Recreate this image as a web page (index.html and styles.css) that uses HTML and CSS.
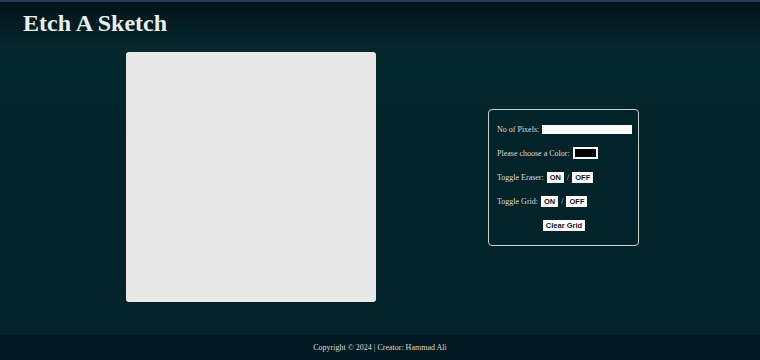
FILE: index.html
```html
<!DOCTYPE html>
<html>
<head>
    <meta charset="utf-8"/>
    <title>Etch A Sketch</title>
    <link rel="stylesheet" href="styles.css">
</head>
<body>
<header class="top">
    <h1>Etch A Sketch</h1>
</header>
<div class="main">
    <div class="board">
        <div class="grid"></div>
        <div class="panel">
            <div class="row">
                <label for="pixels">No of Pixels:</label>
                <input type="text" id="pixels" class="pixels">
            </div>
            <div class="row">
                <label>Please choose a Color:</label>
                <span class="color"></span>
            </div>
            <div class="row">
                Toggle Eraser: <button class="btn">ON</button> / <button class="btn">OFF</button>
            </div>
            <div class="row">
                Toggle Grid: <button class="btn">ON</button> / <button class="btn">OFF</button>
            </div>
            <div class="row center">
                <button class="btn">Clear Grid</button>
            </div>
        </div>
    </div>
</div>
<footer class="foot">Copyright &copy; 2024 | Creator: Hammad Ali</footer>
</body>
</html>
```

FILE: styles.css
```css
html, body, h1, div {
    margin: 0;
    padding: 0;
}

body {
    width: 760px;
    height: 360px;
    overflow: hidden;
    font-family: "Liberation Serif", "Times New Roman", serif;
    color: #e6e6e6;
    background: #022329;
}

.top {
    height: 43px;
    border-top: 2px solid #2b3a5a;
    background: linear-gradient(#021419, #03262b);
}

.top h1 {
    font-size: 24px;
    font-weight: bold;
    color: #e8eeee;
    padding-left: 23px;
    line-height: 42px;
}

.main {
    height: 283px;
    padding-top: 7px;
    background: linear-gradient(#03292c, #022329 40%, #02232a);
}

.board {
    height: 250px;
    display: flex;
    align-items: center;
    padding-left: 126px;
    gap: 112px;
}

.grid {
    width: 250px;
    height: 250px;
    background: #e8e8e8;
    border-radius: 3px;
}

.panel {
    width: 134px;
    height: 135px;
    padding: 0 7px 0 8px;
    border: 1px solid #c9d0d0;
    border-radius: 4px;
    display: flex;
    flex-direction: column;
    justify-content: center;
    gap: 8px;
    font-size: 8px;
    color: #dcdcdc;
}

.row {
    height: 16px;
    display: flex;
    align-items: center;
    gap: 3px;
    white-space: nowrap;
}

.row.center {
    justify-content: center;
}

.pixels {
    width: 88px;
    height: 7px;
    padding: 0;
    margin: 0;
    border: 1px solid #fff;
    background: #fff;
}

.color {
    width: 21px;
    height: 8px;
    background: #000;
    border: 2px solid #fff;
}

.btn {
    font-family: "Liberation Sans", Arial, sans-serif;
    font-size: 7.5px;
    font-weight: bold;
    color: #111;
    background: #fff;
    border: none;
    padding: 2px 3px;
    line-height: 7px;
}

.foot {
    height: 25px;
    line-height: 25px;
    text-align: center;
    font-size: 8px;
    color: #dcdcdc;
    background: #011a21;
}
```
